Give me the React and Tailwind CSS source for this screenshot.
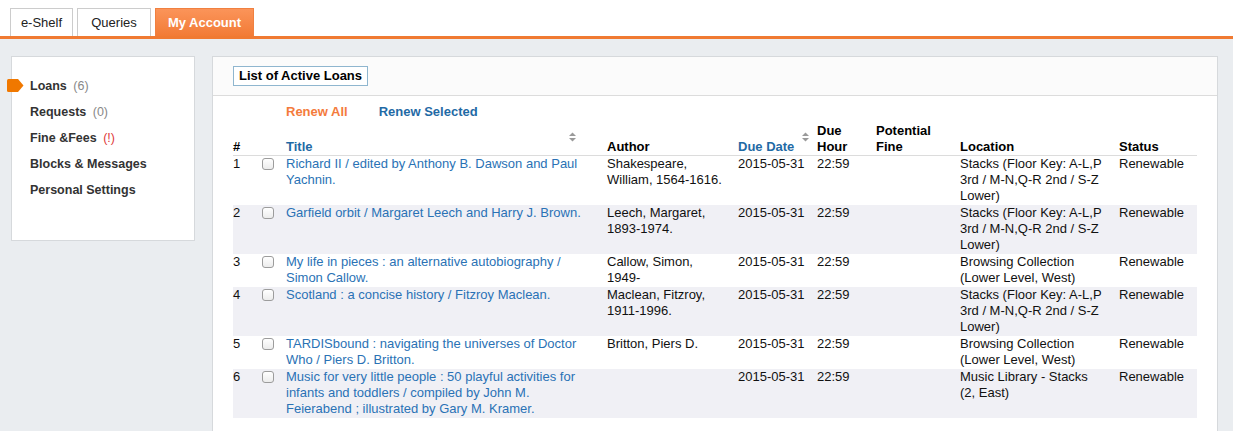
import React from "react";

const loans = [
  {
    n: 1,
    title: "Richard II / edited by Anthony B. Dawson and Paul Yachnin.",
    author: "Shakespeare, William, 1564-1616.",
    location: "Stacks (Floor Key: A-L,P 3rd / M-N,Q-R 2nd / S-Z Lower)",
  },
  {
    n: 2,
    title: "Garfield orbit / Margaret Leech and Harry J. Brown.",
    author: "Leech, Margaret, 1893-1974.",
    location: "Stacks (Floor Key: A-L,P 3rd / M-N,Q-R 2nd / S-Z Lower)",
  },
  {
    n: 3,
    title: "My life in pieces : an alternative autobiography / Simon Callow.",
    author: "Callow, Simon, 1949-",
    location: "Browsing Collection (Lower Level, West)",
  },
  {
    n: 4,
    title: "Scotland : a concise history / Fitzroy Maclean.",
    author: "Maclean, Fitzroy, 1911-1996.",
    location: "Stacks (Floor Key: A-L,P 3rd / M-N,Q-R 2nd / S-Z Lower)",
  },
  {
    n: 5,
    title: "TARDISbound : navigating the universes of Doctor Who / Piers D. Britton.",
    author: "Britton, Piers D.",
    location: "Browsing Collection (Lower Level, West)",
  },
  {
    n: 6,
    title: "Music for very little people : 50 playful activities for infants and toddlers / compiled by John M. Feierabend ; illustrated by Gary M. Kramer.",
    author: "",
    location: "Music Library - Stacks (2, East)",
  },
];

function SortIcon() {
  return (
    <svg width="9" height="10" viewBox="0 0 9 10" className="block">
      <path d="M4.5 0.5 L8 4 L1 4 Z" fill="#9a9a9a" />
      <path d="M4.5 9.5 L8 6 L1 6 Z" fill="#9a9a9a" />
    </svg>
  );
}

function Checkbox() {
  return (
    <span className="mt-[2px] block h-[12px] w-[12px] rounded-[3px] border border-[#9c9c9c] bg-gradient-to-b from-white to-[#ececec]" />
  );
}

export default function App() {
  return (
    <div
      className="min-h-[431px] w-[1233px] bg-[#eaedf0] text-[13px] leading-[16px] text-[#111]"
      style={{ fontFamily: '"Liberation Sans", Arial, sans-serif' }}
    >
      {/* Tab bar */}
      <div className="flex h-[39px] items-end gap-[4px] border-b-[3px] border-[#f07a32] bg-white pl-[10px]">
        <div className="flex h-[28px] w-[63px] items-center justify-center border border-b-0 border-[#cccccc] bg-white pt-[1px] text-[13px] text-[#222]">
          e-Shelf
        </div>
        <div className="flex h-[28px] w-[74px] items-center justify-center border border-b-0 border-[#cccccc] bg-white pt-[1px] text-[13px] text-[#222]">
          Queries
        </div>
        <div className="flex h-[28px] w-[99px] items-center justify-center border border-b-0 border-[#f08040] bg-gradient-to-b from-[#fb9459] to-[#f27b35] pt-[1px] text-[13px] font-bold text-white">
          My Account
        </div>
      </div>

      <div className="flex items-start gap-[17px] pl-[11px] pt-[17px]">
        {/* Sidebar */}
        <div className="relative h-[185px] w-[184px] shrink-0 border border-[#d6d9dc] bg-white pl-[18px] pt-[21px]">
          <div className="flex flex-col gap-[10px] text-[12.5px] font-bold leading-[16px] text-[#333]">
            <div className="relative h-[16px]">
              <svg
                width="17"
                height="13"
                viewBox="0 0 17 13"
                className="absolute left-[-23px] top-[1px]"
              >
                <path d="M1.5 0 L11 0 L16.5 6.5 L11 13 L1.5 13 Q0 13 0 11.5 L0 1.5 Q0 0 1.5 0 Z" fill="#f07800" />
              </svg>
              Loans <span className="ml-[3px] font-normal text-[#888]">(6)</span>
            </div>
            <div className="h-[16px]">
              Requests <span className="ml-[3px] font-normal text-[#888]">(0)</span>
            </div>
            <div className="h-[16px]">
              Fine &amp;Fees <span className="ml-[3px] font-normal text-[#e03a3a]">(!)</span>
            </div>
            <div className="h-[16px]">Blocks &amp; Messages</div>
            <div className="h-[16px]">Personal Settings</div>
          </div>
        </div>

        {/* Main panel */}
        <div className="min-h-[376px] w-[1006px] shrink-0 border border-b-0 border-[#d6d9dc] bg-white">
          <div className="flex h-[39px] items-center border-b border-[#dcdcdc] bg-[#fbfbfb] pl-[20px]">
            <div className="border border-[#8fb6cf] bg-white px-[5px] py-[1px] text-[13px] font-bold leading-[16px] text-black">
              List of Active Loans
            </div>
          </div>

          <div className="px-[20px]">
            <div className="flex gap-[31px] pl-[53px] pt-[8px] text-[13px] font-bold">
              <span className="text-[#f47b3c]">Renew All</span>
              <span className="text-[#1f6aa5]">Renew Selected</span>
            </div>

            <table className="mt-[3px] w-[964px] table-fixed border-collapse">
              <colgroup>
                <col className="w-[28px]" />
                <col className="w-[25px]" />
                <col className="w-[321px]" />
                <col className="w-[131px]" />
                <col className="w-[79px]" />
                <col className="w-[59px]" />
                <col className="w-[84px]" />
                <col className="w-[159px]" />
                <col className="w-[78px]" />
              </colgroup>
              <thead>
                <tr className="border-b border-[#dcdcdc] text-left align-bottom font-bold">
                  <th className="text-black">#</th>
                  <th></th>
                  <th className="relative text-[#1f6aa5]">
                    Title
                    <span className="absolute right-[30px] top-[9px]">
                      <SortIcon />
                    </span>
                  </th>
                  <th className="text-black">Author</th>
                  <th className="relative text-[#1f6aa5]">
                    Due Date
                    <span className="absolute right-[7px] top-[9px]">
                      <SortIcon />
                    </span>
                  </th>
                  <th className="text-black">
                    Due
                    <br />
                    Hour
                  </th>
                  <th className="text-black">
                    Potential
                    <br />
                    Fine
                  </th>
                  <th className="text-black">Location</th>
                  <th className="text-black">Status</th>
                </tr>
              </thead>
              <tbody>
                {loans.map((l, i) => (
                  <tr
                    key={l.n}
                    className={`align-top ${i % 2 === 1 ? "bg-[#f0f0f5]" : "bg-white"}`}
                  >
                    <td className="pb-[1px]">{l.n}</td>
                    <td className="pb-[1px] pl-[1px]">
                      <Checkbox />
                    </td>
                    <td className="pb-[1px] pr-[20px] text-[#2a72b5]">{l.title}</td>
                    <td className="pb-[1px] pr-[12px]">{l.author}</td>
                    <td className="pb-[1px]">2015-05-31</td>
                    <td className="pb-[1px]">22:59</td>
                    <td className="pb-[1px]"></td>
                    <td className="pb-[1px] pr-[14px]">{l.location}</td>
                    <td className="pb-[1px]">Renewable</td>
                  </tr>
                ))}
              </tbody>
            </table>
          </div>
        </div>
      </div>
    </div>
  );
}
